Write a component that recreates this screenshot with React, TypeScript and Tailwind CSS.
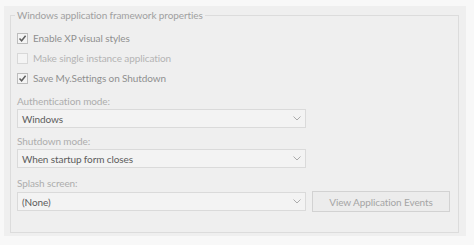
import React from "react";

const font = { fontFamily: 'Lato, "Open Sans", sans-serif' };

function Check({ checked, label }: { checked: boolean; label: string }) {
  return (
    <div className="flex items-center h-5 gap-[5px]">
      <div
        className={`w-[11px] h-[11px] border bg-[#f4f4f4] flex items-center justify-center ${
          checked ? "border-[#bdbdbd]" : "border-[#d8d8d8]"
        }`}
      >
        {checked && (
          <svg width="9" height="9" viewBox="0 0 9 9">
            <path d="M1.5 4.5 L3.6 6.8 L7.6 1.8" fill="none" stroke="#5e5e5e" strokeWidth="1.5" />
          </svg>
        )}
      </div>
      <span className={checked ? "text-[#8f8f8f]" : "text-[#b4b4b4]"}>{label}</span>
    </div>
  );
}

function Select({ value }: { value: string }) {
  return (
    <div className="w-[289px] h-[19px] border border-[#dadada] bg-[#f3f3f3] flex items-center justify-between pl-[4px] pr-[4px]">
      <span className="text-[#5c5c5c]">{value}</span>
      <svg width="8" height="5" viewBox="0 0 8 5">
        <path d="M0.5 0.5 L4 4 L7.5 0.5" fill="none" stroke="#ababab" strokeWidth="1" />
      </svg>
    </div>
  );
}

export default function App() {
  return (
    <div
      className="w-[474px] h-[245px] bg-[#f8f8f8] pt-[6px] pl-[4px] text-[10px] leading-[16px] tracking-[-0.1px]"
      style={font}
    >
      <div className="w-[462px] h-[230px] bg-[#efefef] pt-[9px] pl-[6px]">
        <div className="relative w-[449px] h-[218px] border border-[#dcdcdc] pt-[12px] pl-[6px]">
          <div className="absolute -top-[9px] left-[4px] px-[2px] bg-[#efefef] text-[#a0a0a0]">
            Windows application framework properties
          </div>
          <Check checked label="Enable XP visual styles" />
          <Check checked={false} label="Make single instance application" />
          <Check checked label="Save My.Settings on Shutdown" />
          <div className="text-[#adadad] mt-[5px] h-[16px]">Authentication mode:</div>
          <Select value="Windows" />
          <div className="text-[#adadad] mt-[5px] h-[16px]">Shutdown mode:</div>
          <Select value="When startup form closes" />
          <div className="text-[#adadad] mt-[7px] h-[16px]">Splash screen:</div>
          <div className="flex items-center gap-[6px]">
            <Select value="(None)" />
            <div className="w-[138px] h-[21px] border border-[#d2d2d2] bg-[#ececec] flex items-center justify-center text-[#a5a5a5]">
              View Application Events
            </div>
          </div>
        </div>
      </div>
    </div>
  );
}
